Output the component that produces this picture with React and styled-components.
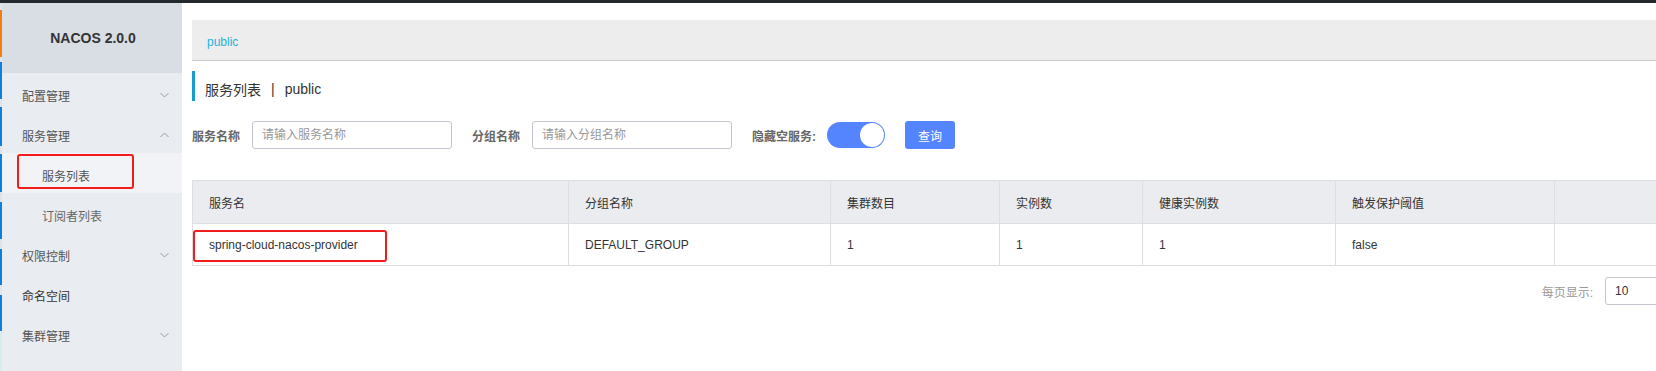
import styled, { createGlobalStyle } from "styled-components";

const GlobalStyle = createGlobalStyle`
  body {
    margin: 0;
    overflow: hidden;
    background: #fff;
    font-family: "Liberation Sans", "Noto Sans CJK SC", sans-serif;
  }
`;

const Page = styled.div`
  width: 1656px;
  height: 371px;
  overflow: hidden;
  display: flex;
  flex-direction: column;
`;

const TopBar = styled.div`
  height: 3px;
  background: #23292f;
  flex-shrink: 0;
`;

const Body = styled.div`
  flex: 1;
  display: flex;
  min-height: 0;
`;

// 뒤에 겹쳐있는 창의 가장자리
const EdgeStrip = styled.div`
  width: 2px;
  flex-shrink: 0;
  display: flex;
  flex-direction: column;
  background: #dfe3ea;
`;

const EdgeSeg = styled.div`
  height: ${(props) => props.$h}px;
  background: ${(props) => props.$color || "transparent"};
`;

const Sidebar = styled.div`
  width: 180px;
  flex-shrink: 0;
  background: #e9ecf0;
  display: flex;
  flex-direction: column;
`;

const Logo = styled.div`
  height: 70px;
  background: #d9dde4;
  display: flex;
  align-items: center;
  justify-content: center;
  padding-left: 2px;
  font-size: 14px;
  font-weight: bold;
  color: #333;
`;

const MenuItem = styled.div`
  position: relative;
  height: 40px;
  box-sizing: border-box;
  padding: 4px 13px 0 ${(props) => (props.$sub ? 40 : 20)}px;
  display: flex;
  align-items: center;
  justify-content: space-between;
  font-size: 12px;
  color: ${(props) => props.$color || "#555"};
  background: ${(props) => (props.$active ? "#f2f3f6" : "transparent")};
`;

const MarkBox = styled.div`
  position: absolute;
  border: 2.5px solid #f21c1c;
  border-radius: 3px;
  box-sizing: border-box;
  left: ${(props) => props.$l}px;
  top: ${(props) => props.$t}px;
  width: ${(props) => props.$w}px;
  height: ${(props) => props.$h}px;
`;

const Main = styled.div`
  flex: 1;
  min-width: 0;
  overflow: hidden;
  padding: 17px 0 0 10px;
`;

const Content = styled.div`
  width: 1495px;
`;

const Breadcrumb = styled.div`
  height: 41px;
  box-sizing: border-box;
  background: #ededed;
  border-bottom: 1px solid #cccccc;
  display: flex;
  align-items: center;
  padding: 4px 0 0 15px;
  font-size: 12px;
  color: #1fb3dd;
`;

const Title = styled.div`
  margin-top: 10px;
  height: 30px;
  box-sizing: border-box;
  border-left: 3px solid #1a9bd0;
  padding: 6px 0 0 10px;
  display: flex;
  align-items: center;
  font-size: 14px;
  color: #333;
`;

const Sep = styled.span`
  margin: 0 10px;
`;

const FilterRow = styled.div`
  margin-top: 20px;
  height: 28px;
  display: flex;
  align-items: center;
`;

const Label = styled.span`
  font-size: 12px;
  font-weight: bold;
  color: #666;
  margin-right: ${(props) => props.$gap || 12}px;
`;

const Input = styled.input`
  width: 200px;
  height: 28px;
  box-sizing: border-box;
  border: 1px solid #c4c6cf;
  border-radius: 3px;
  padding: 0 9px;
  margin-right: 20px;
  font-family: inherit;
  font-size: 12px;
  color: #333;
  outline: none;

  &::placeholder {
    color: #999;
  }
`;

const Switch = styled.div`
  width: 58px;
  height: 26px;
  box-sizing: border-box;
  border-radius: 13px;
  background: #5584ff;
  padding: 1px;
  display: flex;
  justify-content: flex-end;
  margin-right: 20px;
`;

const Knob = styled.div`
  width: 24px;
  height: 24px;
  border-radius: 50%;
  background: #fff;
`;

const Button = styled.button`
  width: 50px;
  height: 28px;
  border: none;
  border-radius: 3px;
  background: #5584ff;
  color: #fff;
  font-family: inherit;
  font-size: 12px;
  padding: 0;
`;

const Table = styled.table`
  margin-top: 31px;
  border-collapse: collapse;
  table-layout: fixed;
  width: 1500px;
  font-size: 12px;
  color: #333;
`;

const Th = styled.th`
  height: 43px;
  box-sizing: border-box;
  background: #ebecf0;
  border: 1px solid #dcdee3;
  text-align: left;
  font-weight: normal;
  padding: 0 16px;
`;

const Td = styled.td`
  position: relative;
  height: 42px;
  box-sizing: border-box;
  border: 1px solid #dcdee3;
  padding: 0 16px;
`;

const Pager = styled.div`
  margin-top: 11px;
  display: flex;
  justify-content: flex-end;
  align-items: center;
`;

const PagerLabel = styled.span`
  font-size: 12px;
  color: #999;
  margin-right: 12px;
`;

const Select = styled.div`
  width: 82px;
  height: 28px;
  box-sizing: border-box;
  border: 1px solid #c4c6cf;
  border-radius: 3px;
  display: flex;
  align-items: center;
  justify-content: space-between;
  padding: 0 6px 0 9px;
  font-size: 12px;
  color: #333;
`;

const Chevron = ({ up, color = "#999" }) => (
  <svg width="9" height="6" viewBox="0 0 9 6">
    <polyline
      points={up ? "0.5,5 4.5,1 8.5,5" : "0.5,1 4.5,5 8.5,1"}
      fill="none"
      stroke={color}
      strokeWidth="1"
    />
  </svg>
);

const edge = [
  [7, null],
  [47, "#f07d14"],
  [5, null],
  [38, "#0f7fd9"],
  [8, null],
  [39, "#0f7fd9"],
  [8, null],
  [38, "#0f7fd9"],
  [10, null],
  [37, "#0f7fd9"],
  [10, null],
  [37, "#0f7fd9"],
  [10, null],
  [36, "#0f7fd9"],
  [40, "#d6eef2"],
];

const columns = [
  { name: "服务名", w: 376 },
  { name: "分组名称", w: 262 },
  { name: "集群数目", w: 169 },
  { name: "实例数", w: 143 },
  { name: "健康实例数", w: 193 },
  { name: "触发保护阈值", w: 219 },
  { name: "", w: 138 },
];

const row = ["spring-cloud-nacos-provider", "DEFAULT_GROUP", "1", "1", "1", "false", ""];

export default function App() {
  return (
    <Page>
      <GlobalStyle />
      <TopBar />
      <Body>
        <EdgeStrip>
          {edge.map(([h, c], i) => (
            <EdgeSeg key={i} $h={h} $color={c} />
          ))}
        </EdgeStrip>
        <Sidebar>
          <Logo>NACOS 2.0.0</Logo>
          <MenuItem>
            配置管理 <Chevron />
          </MenuItem>
          <MenuItem>
            服务管理 <Chevron up />
          </MenuItem>
          <MenuItem $sub $active>
            服务列表
            <MarkBox $l={15} $t={1} $w={117} $h={35} />
          </MenuItem>
          <MenuItem $sub $color="#666">
            订阅者列表
          </MenuItem>
          <MenuItem>
            权限控制 <Chevron />
          </MenuItem>
          <MenuItem $color="#333">命名空间</MenuItem>
          <MenuItem>
            集群管理 <Chevron />
          </MenuItem>
        </Sidebar>
        <Main>
          <Content>
            <Breadcrumb>public</Breadcrumb>
            <Title>
              服务列表<Sep>|</Sep>public
            </Title>
            <FilterRow>
              <Label>服务名称</Label>
              <Input placeholder="请输入服务名称" />
              <Label>分组名称</Label>
              <Input placeholder="请输入分组名称" />
              <Label $gap={11}>隐藏空服务:</Label>
              <Switch>
                <Knob />
              </Switch>
              <Button>查询</Button>
            </FilterRow>
            <Table>
              <colgroup>
                {columns.map((c, i) => (
                  <col key={i} style={{ width: c.w }} />
                ))}
              </colgroup>
              <thead>
                <tr>
                  {columns.map((c, i) => (
                    <Th key={i}>{c.name}</Th>
                  ))}
                </tr>
              </thead>
              <tbody>
                <tr>
                  {row.map((v, i) => (
                    <Td key={i}>
                      {v}
                      {i === 0 && <MarkBox $l={0} $t={6} $w={194} $h={32} />}
                    </Td>
                  ))}
                </tr>
              </tbody>
            </Table>
            <Pager>
              <PagerLabel>每页显示:</PagerLabel>
              <Select>
                10 <Chevron color="#666" />
              </Select>
            </Pager>
          </Content>
        </Main>
      </Body>
    </Page>
  );
}
